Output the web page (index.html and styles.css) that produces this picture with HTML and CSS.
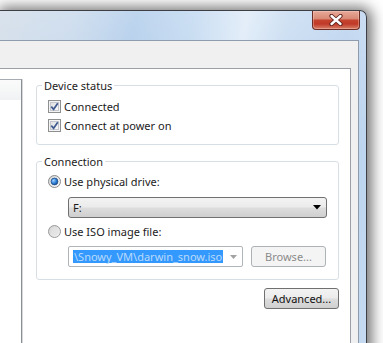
FILE: index.html
```html
<!DOCTYPE html>
<html>
<head>
<meta charset="utf-8">
<link rel="stylesheet" href="styles.css">
</head>
<body>
<div class="stage">
  <div class="window">
    <div class="titlebar">
      <div class="close">
        <svg width="16" height="12" viewBox="0 0 16 12"><path d="M3.5 2 L12.5 10 M12.5 2 L3.5 10" stroke="#5a1f18" stroke-width="4.2" stroke-linecap="round"/><path d="M3.5 2 L12.5 10 M12.5 2 L3.5 10" stroke="#ffffff" stroke-width="2.4" stroke-linecap="round"/></svg>
      </div>
    </div>
    <div class="client">
      <div class="tabpage">
        <div class="listbox"><div class="lhead"></div></div>
        <div class="panel">
          <fieldset class="group g1">
            <legend>Device status</legend>
            <div class="row first">
              <svg class="ctl" width="13" height="13" viewBox="0 0 13 13"><defs><linearGradient id="cb" x1="0" y1="0" x2="1" y2="1"><stop offset="0" stop-color="#dedede"/><stop offset="1" stop-color="#fbfbfb"/></linearGradient></defs><rect x="0.5" y="0.5" width="12" height="12" fill="#f4f4f4" stroke="#8e8f8f"/><rect x="2.5" y="2.5" width="8" height="8" fill="url(#cb)" stroke="#c3c6cc"/><path d="M3.3 6.6 L5.6 9.3 L9.8 3.2" fill="none" stroke="#3f5a91" stroke-width="1.7"/></svg>
              <span>Connected</span>
            </div>
            <div class="row">
              <svg class="ctl" width="13" height="13" viewBox="0 0 13 13"><rect x="0.5" y="0.5" width="12" height="12" fill="#f4f4f4" stroke="#8e8f8f"/><rect x="2.5" y="2.5" width="8" height="8" fill="url(#cb)" stroke="#c3c6cc"/><path d="M3.3 6.6 L5.6 9.3 L9.8 3.2" fill="none" stroke="#3f5a91" stroke-width="1.7"/></svg>
              <span>Connect at power on</span>
            </div>
          </fieldset>
          <fieldset class="group g2">
            <legend>Connection</legend>
            <div class="row first">
              <svg class="ctl" width="13" height="13" viewBox="0 0 13 13"><defs><radialGradient id="rb" cx="0.35" cy="0.35" r="0.7"><stop offset="0" stop-color="#9fd0ff"/><stop offset="0.6" stop-color="#2f7fd6"/><stop offset="1" stop-color="#174c92"/></radialGradient><linearGradient id="rg" x1="0" y1="0" x2="1" y2="1"><stop offset="0" stop-color="#d2d2d2"/><stop offset="1" stop-color="#fbfbfb"/></linearGradient></defs><circle cx="6.5" cy="6.5" r="6" fill="url(#rg)" stroke="#8a8a8a"/><circle cx="6.5" cy="6.5" r="3.4" fill="url(#rb)" stroke="#1d4f8a" stroke-width="0.8"/></svg>
              <span>Use physical drive:</span>
            </div>
            <div class="select">
              <span>F:</span>
              <svg width="8" height="5" viewBox="0 0 8 5"><path d="M0 0 H8 L4 4.5 Z" fill="#000"/></svg>
            </div>
            <div class="row second">
              <svg class="ctl" width="13" height="13" viewBox="0 0 13 13"><defs><linearGradient id="ru" x1="0" y1="0" x2="1" y2="1"><stop offset="0" stop-color="#cfcfcf"/><stop offset="1" stop-color="#f6f6f6"/></linearGradient></defs><circle cx="6.5" cy="6.5" r="6" fill="url(#ru)" stroke="#9a9a9a"/><circle cx="6.5" cy="6.5" r="4" fill="#e2e2e2" opacity="0.6"/></svg>
              <span>Use ISO image file:</span>
            </div>
            <div class="isoline">
              <div class="combo">
                <span class="sel">\Snowy_VM\darwin_snow.iso</span>
                <svg width="7" height="4" viewBox="0 0 7 4"><path d="M0 0 H7 L3.5 4 Z" fill="#a2a2a2"/></svg>
              </div>
              <div class="btn disabled">Browse...</div>
            </div>
          </fieldset>
          <div class="actions">
            <div class="btn">Advanced...</div>
          </div>
        </div>
      </div>
    </div>
  </div>
</div>
</body>
</html>
```
FILE: styles.css
```css
html, body {
  margin: 0;
  padding: 0;
  background: #ffffff;
}
.stage {
  width: 383px;
  height: 343px;
  overflow: hidden;
  background: #ffffff;
  font-family: "Segoe UI", "Noto Sans", "Open Sans", sans-serif;
  font-size: 11px;
  color: #1c1c1c;
}
.window {
  margin-top: 10px;
  width: 366px;
  height: 345px;
  display: flex;
  flex-direction: column;
  border-top: 1px solid #3d3f44;
  border-right: 1px solid #3d3f44;
  border-top-right-radius: 7px;
  box-shadow: 2px 0 14px 3px rgba(0,0,0,0.55);
  background:
    linear-gradient(180deg, rgba(255,255,255,0.25), rgba(255,255,255,0) 40%),
    linear-gradient(100deg, #cdd9e6 0%, #c2d5ea 18%, #a9c7e9 32%, #bcd5ef 46%, #dbe9f7 58%, #c2d8f0 68%, #b5cfed 82%, #c6dbf1 100%);
}
.titlebar {
  flex: none;
  height: 29px;
  display: flex;
  justify-content: flex-end;
  align-items: flex-start;
}
.close {
  width: 46px;
  height: 18px;
  margin-right: 6px;
  border: 1px solid #6d2c24;
  border-top: none;
  border-radius: 0 0 4px 4px;
  background: linear-gradient(180deg, #e7a999 0%, #d98a76 42%, #c4432f 52%, #c03a27 72%, #d8806a 100%);
  display: flex;
  align-items: center;
  justify-content: center;
  box-shadow: inset 0 0 0 1px rgba(255,220,210,0.35);
}
.client {
  flex: 1;
  min-height: 0;
  overflow: hidden;
  margin-right: 7px;
  border-top: 1px solid #8e9cae;
  border-right: 1px solid #8e9cae;
  background: #f0f0f0;
  padding-top: 27px;
}
.tabpage {
  margin-right: 7px;
  height: 320px;
  background: #ffffff;
  border-top: 1px solid #9a9ea6;
  border-right: 1px solid #9a9ea6;
  display: flex;
  align-items: flex-start;
}
.listbox {
  width: 21px;
  height: 300px;
  margin-top: 10px;
  border-top: 1px solid #a7abb2;
  border-right: 1px solid #8a8e96;
  box-shadow: 1px 0 0 #d8d8d8;
  background: #ffffff;
}
.lhead {
  height: 20px;
  background: linear-gradient(180deg, #fbfbfb, #f1f2f3);
}
.panel {
  margin-left: 14px;
  margin-top: 9px;
  width: 303px;
}
.group {
  margin: 0;
  min-width: 0;
  border: 1px solid #d8dfe4;
  border-radius: 3px;
  padding: 0 5px 9px 5px;
}
.group legend {
  padding: 0 2px;
  font-size: 11px;
  line-height: 15px;
}
.g2 {
  margin-top: 9px;
  padding-bottom: 12px;
}
.row {
  display: flex;
  align-items: center;
  gap: 2px;
  height: 19px;
  margin-left: 6px;
  white-space: nowrap;
  font-size: 11px;
}
.row.first {
  margin-top: 4px;
}
.g2 .row.first {
  margin-top: 3px;
}
.row.second {
  margin-top: 4px;
}
.ctl {
  flex: none;
  margin-right: 1px;
}
.select {
  margin-left: 26px;
  margin-top: 6px;
  width: 259px;
  height: 21px;
  box-sizing: border-box;
  border: 1px solid #707070;
  border-radius: 3px;
  background: linear-gradient(180deg, #f3f3f3 0%, #ebebeb 48%, #dddddd 52%, #cfcfcf 100%);
  display: flex;
  align-items: center;
  justify-content: space-between;
  padding: 0 5px 0 4px;
}
.isoline {
  display: flex;
  gap: 8px;
  margin-left: 26px;
  margin-top: 5px;
}
.combo {
  width: 175px;
  height: 21px;
  box-sizing: border-box;
  border: 1px solid #b0b5b9;
  border-radius: 2px;
  background: #ffffff;
  display: flex;
  align-items: center;
  justify-content: space-between;
  padding: 0 5px 0 4px;
}
.sel {
  background: #3399ff;
  color: #b9d9fb;
  line-height: 13px;
  height: 13px;
  padding: 0 1px;
  white-space: nowrap;
}
.btn {
  width: 75px;
  height: 21px;
  box-sizing: border-box;
  border: 1px solid #707070;
  border-radius: 3px;
  background: linear-gradient(180deg, #f3f3f3 0%, #ebebeb 48%, #dddddd 52%, #cfcfcf 100%);
  display: flex;
  align-items: center;
  justify-content: center;
  color: #111;
}
.btn.disabled {
  border-color: #adb2b5;
  background: #f4f4f4;
  color: #8b8b8b;
}
.actions {
  display: flex;
  justify-content: flex-end;
  margin-top: 8px;
}
```
